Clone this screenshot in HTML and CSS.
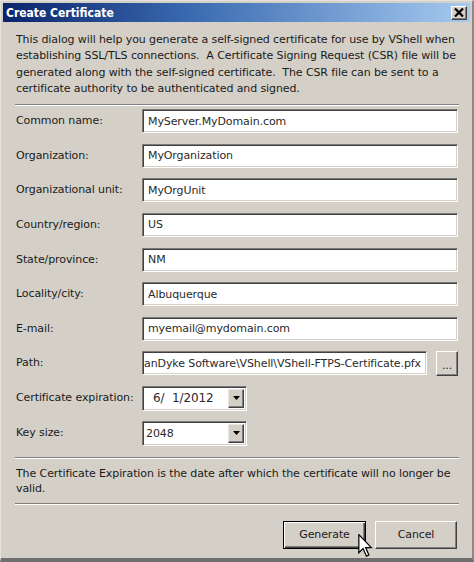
FILE: index.html
```html
<!DOCTYPE html>
<html>
<head>
<meta charset="utf-8">
<link rel="stylesheet" href="styles.css">
</head>
<body>
<div class="window">
  <div class="titlebar">
    <span class="title">Create Certificate</span>
    <span class="close">
      <svg width="10" height="9" viewBox="0 0 10 9"><path d="M1 0.5 L9 8.5 M9 0.5 L1 8.5" stroke="#000" stroke-width="2.2"/></svg>
    </span>
  </div>
  <div class="content">
    <p class="intro">This dialog will help you generate a self-signed certificate for use by VShell when establishing SSL/TLS connections.&nbsp; A Certificate Signing Request (CSR) file will be generated along with the self-signed certificate.&nbsp; The CSR file can be sent to a certificate authority to be authenticated and signed.</p>
    <div class="sep"></div>
    <div class="form">
      <label>Common name:</label><div class="field">MyServer.MyDomain.com</div>
      <label>Organization:</label><div class="field">MyOrganization</div>
      <label>Organizational unit:</label><div class="field">MyOrgUnit</div>
      <label>Country/region:</label><div class="field">US</div>
      <label>State/province:</label><div class="field">NM</div>
      <label>Locality/city:</label><div class="field">Albuquerque</div>
      <label>E-mail:</label><div class="field">myemail@mydomain.com</div>
      <label>Path:</label>
      <div class="pathrow">
        <div class="field path"><span>anDyke Software\VShell\VShell-FTPS-Certificate.pfx</span></div>
        <div class="btn dots">...</div>
      </div>
      <label>Certificate expiration:</label>
      <div class="combo date"><span class="val">6/&nbsp; 1/2012</span><span class="arrow"><svg width="7" height="4" viewBox="0 0 7 4"><path d="M0 0 H7 L3.5 4 Z" fill="#000"/></svg></span></div>
      <label>Key size:</label>
      <div class="combo"><span class="val">2048</span><span class="arrow"><svg width="7" height="4" viewBox="0 0 7 4"><path d="M0 0 H7 L3.5 4 Z" fill="#000"/></svg></span></div>
    </div>
    <div class="sep sep2"></div>
    <p class="note">The Certificate Expiration is the date after which the certificate will no longer be valid.</p>
    <div class="sep sep3"></div>
    <div class="buttons">
      <div class="btn default"><span>Generate</span></div>
      <div class="btn">Cancel</div>
      <svg class="cursor" width="15" height="23" viewBox="0 0 12 19"><path d="M0.5 0.5 V15.5 L4 12 L6.8 18.3 L8.8 17.4 L6.1 11.2 H10.8 Z" fill="#fff" stroke="#000" stroke-width="1" stroke-linejoin="miter"/></svg>
    </div>
  </div>
</div>
</body>
</html>
```

FILE: styles.css
```css
html, body {
  margin: 0;
  padding: 0;
  background: #d4d0c8;
}
body {
  font-family: Tahoma, "DejaVu Sans", sans-serif;
  font-size: 11px;
  letter-spacing: -0.1px;
  color: #1a1a1a;
}
.window {
  position: relative;
  width: 474px;
  height: 562px;
  box-sizing: border-box;
  background: #d4d0c8;
  border-left: 1px solid #e4e2dc;
  border-top: 1px solid #e4e2dc;
  border-right: 2px solid #8a8a8a;
  border-bottom: 4px solid #6e6e6e;
  padding: 2px 2px 0 2px;
  overflow: hidden;
}
.titlebar {
  height: 19px;
  background: linear-gradient(to right, #0a246a 0%, #3a6ab0 40%, #a6caf0 100%);
  display: flex;
  align-items: center;
  justify-content: space-between;
  padding: 0 3px 0 3px;
}
.title {
  color: #fff;
  font-family: Tahoma, "DejaVu Sans Condensed", "DejaVu Sans", sans-serif;
  font-weight: bold;
  font-size: 12px;
  letter-spacing: 0;
}
.close {
  width: 16px;
  height: 14px;
  box-sizing: border-box;
  background: #d4d0c8;
  border: 1px solid;
  border-color: #fff #404040 #404040 #fff;
  box-shadow: inset -1px -1px #808080;
  display: flex;
  align-items: center;
  justify-content: center;
}
.close svg { display: block; }
.content {
  padding: 0 11px 0 12px;
}
.intro {
  margin: 10px 0 0 1px;
  line-height: 16.3px;
  width: 446px;
}
.sep {
  height: 1px;
  background: #808080;
  border-bottom: 1px solid #fff;
  margin-top: 7px;
}
.form {
  display: grid;
  grid-template-columns: 127px 316px;
  grid-auto-rows: 24px;
  row-gap: 10.6px;
  margin-top: 3px;
}
.form label {
  display: flex;
  align-items: center;
  padding-left: 1px;
  padding-bottom: 1px;
}
.field {
  box-sizing: border-box;
  height: 24px;
  background: #fff;
  border: 1px solid;
  border-color: #7a7a7a #fff #fff #7a7a7a;
  box-shadow: inset 1px 1px #404040, inset -1px -1px #d4d0c8;
  display: flex;
  align-items: center;
  padding: 0 4px 0 5px;
  white-space: nowrap;
  overflow: hidden;
  color: #2a2a2a;
}
.pathrow {
  display: flex;
  gap: 9px;
  align-items: stretch;
}
.path {
  flex: 1;
  justify-content: flex-end;
  padding-right: 5px;
}
.path span { flex-shrink: 0; }
.btn {
  box-sizing: border-box;
  background: #d4d0c8;
  border: 1px solid;
  border-color: #fff #404040 #404040 #fff;
  box-shadow: inset -1px -1px #808080;
  display: flex;
  align-items: center;
  justify-content: center;
}
.dots {
  width: 22px;
  height: 25px;
  font-size: 11px;
  padding-top: 3px;
}
.combo {
  box-sizing: border-box;
  width: 105px;
  height: 25px;
  background: #fff;
  border: 1px solid;
  border-color: #7a7a7a #fff #fff #7a7a7a;
  box-shadow: inset 1px 1px #404040, inset -1px -1px #d4d0c8;
  display: flex;
  align-items: center;
  justify-content: space-between;
  padding: 2px 2px 2px 3px;
  color: #2a2a2a;
}
.combo.date .val { padding-left: 7px; font-size: 12px; }
.arrow {
  box-sizing: border-box;
  width: 16px;
  height: 19px;
  background: #d4d0c8;
  border: 1px solid;
  border-color: #e8e6e0 #404040 #404040 #e8e6e0;
  box-shadow: inset -1px -1px #808080;
  display: flex;
  align-items: center;
  justify-content: center;
}
.arrow svg { display: block; }
.sep2 { margin-top: 12px; }
.note {
  margin: 7px 0 0 1px;
  line-height: 15.5px;
  width: 446px;
}
.sep3 { margin-top: 6px; }
.buttons {
  position: relative;
  display: flex;
  justify-content: flex-end;
  gap: 9px;
  margin-top: 16px;
  margin-right: 2px;
}
.buttons .btn {
  width: 82px;
  height: 28px;
}
.buttons .btn.default {
  width: 83px;
  border: 1px solid #000;
  box-shadow: inset 1px 1px #fff, inset -1px -1px #404040, inset -2px -2px #808080;
}
.cursor {
  position: absolute;
  left: 343px;
  top: 13px;
}
```
